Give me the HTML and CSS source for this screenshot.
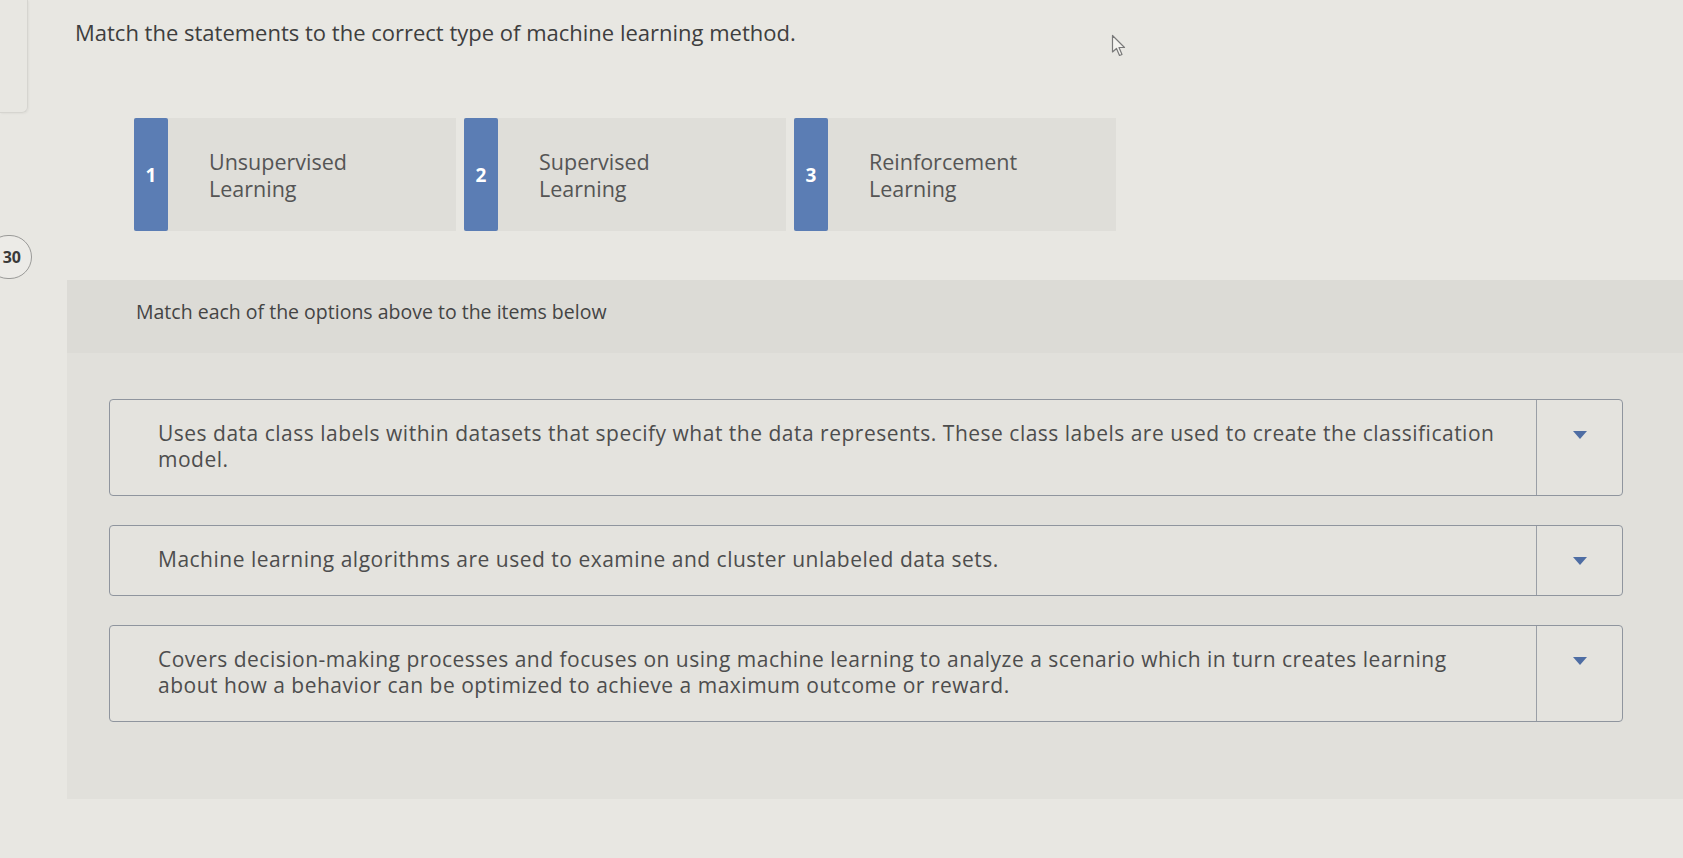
FILE: index.html
```html
<!DOCTYPE html>
<html lang="en">
<head>
<meta charset="utf-8">
<title>Matching question</title>
<link rel="stylesheet" href="styles.css">
</head>
<body>
<div class="side-edge"></div>
<div class="q-badge"><span>30</span></div>
<svg class="cursor" width="16" height="24" viewBox="0 0 16 24"><path d="M1.5 1.5 L1.5 18 L5.5 14.5 L8.5 21.5 L11 20.5 L8 13.5 L13.5 13.5 Z" fill="#f4f3ef" stroke="#7a7a7a" stroke-width="1.2" stroke-linejoin="round"/></svg>
<main class="page">
  <h1 class="prompt">Match the statements to the correct type of machine learning method.</h1>
  <div class="options">
    <div class="option"><div class="tab">1</div><div class="label">Unsupervised<br>Learning</div></div>
    <div class="option"><div class="tab">2</div><div class="label">Supervised<br>Learning</div></div>
    <div class="option"><div class="tab">3</div><div class="label">Reinforcement<br>Learning</div></div>
  </div>
  <section class="panel">
    <div class="panel-head">Match each of the options above to the items below</div>
    <div class="rows">
      <div class="row">
        <div class="stmt">Uses data class labels within datasets that specify what the data represents. These class labels are used to create the classification model.</div>
        <div class="dd"><span class="caret"></span></div>
      </div>
      <div class="row">
        <div class="stmt">Machine learning algorithms are used to examine and cluster unlabeled data sets.</div>
        <div class="dd"><span class="caret"></span></div>
      </div>
      <div class="row">
        <div class="stmt">Covers decision-making processes and focuses on using machine learning to analyze a scenario which in turn creates learning about how a behavior can be optimized to achieve a maximum outcome or reward.</div>
        <div class="dd"><span class="caret"></span></div>
      </div>
    </div>
  </section>
</main>
</body>
</html>
```
FILE: styles.css
```css
html, body {
  margin: 0;
  padding: 0;
}
body {
  background: #e8e7e2;
  font-family: "Open Sans", Lato, Arial, sans-serif;
  color: #4a4a4a;
  width: 1683px;
  height: 858px;
  overflow: hidden;
  position: relative;
}
.side-edge {
  position: absolute;
  left: 0;
  top: 0;
  width: 27px;
  height: 112px;
  border-right: 1px solid #d6d5d0;
  border-bottom: 1px solid #d6d5d0;
  border-bottom-right-radius: 6px;
  box-shadow: 1px 1px 2px rgba(0,0,0,0.04);
}
.q-badge {
  position: absolute;
  left: -14px;
  top: 235px;
  width: 46px;
  height: 44px;
  border: 1.5px solid #9a9a98;
  border-radius: 22px;
  background: #ecebe7;
  display: flex;
  align-items: center;
  justify-content: flex-end;
  padding-right: 10px;
  box-sizing: border-box;
  font-weight: 700;
  font-size: 16px;
  color: #3a3a3a;
}
.cursor {
  position: absolute;
  left: 1111px;
  top: 34px;
}
.page {
  padding-top: 18px;
}
.prompt {
  margin: 0 0 0 75px;
  font-size: 22px;
  font-weight: 400;
  line-height: 28px;
  color: #3e3e3e;
}
.options {
  display: flex;
  gap: 8px;
  margin: 72px 0 0 134px;
}
.option {
  width: 322px;
  height: 113px;
  display: flex;
  background: #dfded9;
}
.tab {
  width: 34px;
  flex: none;
  background: #5b7db4;
  border-radius: 2px;
  color: #ffffff;
  font-weight: 700;
  font-size: 19px;
  display: flex;
  align-items: center;
  justify-content: center;
}
.label {
  padding-left: 41px;
  display: flex;
  align-items: center;
  font-size: 21.5px;
  line-height: 27px;
  color: #555555;
}
.panel {
  margin: 49px 0 0 67px;
  height: 519px;
  background: #e1e0db;
}
.panel-head {
  height: 73px;
  background: #dcdbd6;
  box-sizing: border-box;
  padding: 21px 0 0 69px;
  font-size: 19.5px;
  line-height: 22px;
  color: #444444;
}
.rows {
  display: flex;
  flex-direction: column;
  gap: 29px;
  margin: 46px 60px 0 42px;
}
.row {
  display: grid;
  grid-template-columns: 1fr 86px;
  border: 1.5px solid #8f959e;
  border-radius: 4px;
  background: #e4e3de;
}
.stmt {
  padding: 20px 36px 23px 48px;
  font-size: 21px;
  letter-spacing: 0.5px;
  line-height: 26px;
  color: #4d4d4d;
}
.dd {
  border-left: 1.5px solid #9a9fa6;
  display: flex;
  justify-content: center;
  padding-top: 31px;
}
.caret {
  width: 0;
  height: 0;
  border-left: 7px solid transparent;
  border-right: 7px solid transparent;
  border-top: 8px solid #4e6da3;
}
```
